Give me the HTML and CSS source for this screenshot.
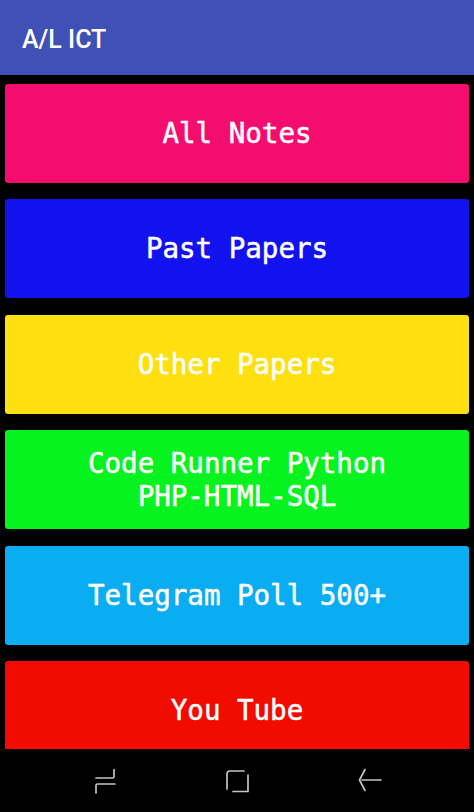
FILE: index.html
```html
<!DOCTYPE html>
<html>
<head>
<meta charset="utf-8">
<link rel="stylesheet" href="styles.css">
</head>
<body>
<div class="screen">
  <header class="appbar"><span class="title">A/L ICT</span></header>
  <main class="menu">
    <div class="btn pink">All Notes</div>
    <div class="btn blue">Past Papers</div>
    <div class="btn yellow">Other Papers</div>
    <div class="btn green">Code Runner Python<br>PHP-HTML-SQL</div>
    <div class="btn cyan">Telegram Poll 500+</div>
    <div class="btn red">You Tube</div>
  </main>
  <nav class="navbar">
    <svg class="navicon" width="24" height="26" viewBox="0 0 24 26">
      <path d="M4 10 H20.5 Q22 10 22 8.5 V1.5"/>
      <path d="M23 16 H5.5 Q4 16 4 17.5 V25"/>
    </svg>
    <svg class="navicon" width="24" height="26" viewBox="0 0 24 26">
      <path d="M2 21 V6 Q2 3 5 3 H19"/>
      <path d="M23 7 V23.5 H8"/>
    </svg>
    <svg class="navicon" width="24" height="26" viewBox="0 0 24 26">
      <path d="M7 1.5 L1.5 12 L7 22.5"/>
      <path d="M4 12 H23"/>
    </svg>
  </nav>
</div>
</body>
</html>
```
FILE: styles.css
```css
html, body {
  margin: 0;
  padding: 0;
  background: #000;
}
.screen {
  width: 474px;
  height: 812px;
  display: flex;
  flex-direction: column;
  overflow: hidden;
  background: #000;
}
.appbar {
  flex: 0 0 75px;
  height: 75px;
  background: #3f51b5;
  display: flex;
  align-items: center;
  padding: 3px 0 0 22px;
  box-sizing: border-box;
}
.title {
  font-family: Roboto, "Liberation Sans", sans-serif;
  font-weight: 500;
  font-size: 25px;
  color: #fff;
}
.menu {
  flex: 1 1 auto;
  min-height: 0;
  overflow: hidden;
  display: flex;
  flex-direction: column;
  gap: 16.6px;
  padding: 8.5px 5px 0 5px;
}
.btn {
  flex: 0 0 99px;
  height: 99px;
  border-radius: 3px;
  display: flex;
  align-items: center;
  justify-content: center;
  text-align: center;
  font-family: "DejaVu Sans Mono", "Liberation Mono", monospace;
  font-weight: normal;
  font-size: 27.5px;
  line-height: 33px;
  color: #fff;
  -webkit-text-stroke: 0.5px #fff;
}
.pink { background: #f50c6f; }
.blue { background: #1212ef; }
.yellow { background: #fee011; }
.green { background: #06f31f; }
.cyan { background: #0aacf2; }
.red { background: #f10b00; }
.navbar {
  flex: 0 0 63px;
  height: 63px;
  background: #000;
  display: flex;
  align-items: center;
  justify-content: center;
  gap: 109px;
}
.navicon {
  fill: none;
  stroke: #c4c4c4;
  stroke-width: 1.7;
  stroke-linecap: round;
  stroke-linejoin: round;
}
```
